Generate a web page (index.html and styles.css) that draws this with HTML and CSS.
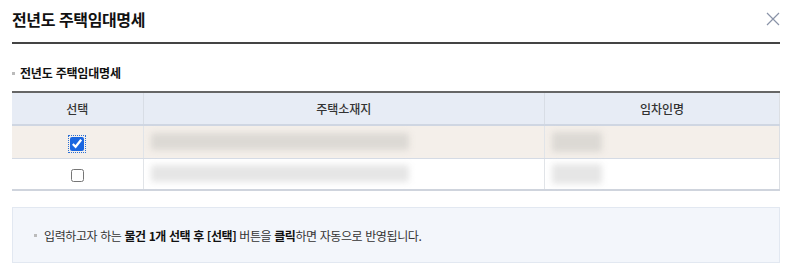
FILE: index.html
```html
<!DOCTYPE html>
<html lang="ko">
<head>
<meta charset="utf-8">
<link rel="stylesheet" href="styles.css">
</head>
<body>
<div class="modal">
  <div class="head">
    <h1 class="title">전년도 주택임대명세</h1>
    <button class="close" aria-label="닫기">
      <svg width="14" height="14" viewBox="0 0 14 14"><path d="M1 1L13 13M13 1L1 13" stroke="#8a93a8" stroke-width="1.2" fill="none"/></svg>
    </button>
  </div>
  <div class="body">
    <h2 class="sub">전년도 주택임대명세</h2>
    <table class="grid">
      <colgroup><col class="c1"><col class="c2"><col class="c3"></colgroup>
      <thead>
        <tr><th>선택</th><th>주택소재지</th><th>임차인명</th></tr>
      </thead>
      <tbody>
        <tr class="sel">
          <td class="chk"><input type="checkbox" class="cb focus" checked></td>
          <td><div class="blur addr"></div></td>
          <td><div class="blur name"></div></td>
        </tr>
        <tr>
          <td class="chk"><input type="checkbox" class="cb"></td>
          <td><div class="blur addr light"></div></td>
          <td><div class="blur name light"></div></td>
        </tr>
      </tbody>
    </table>
    <div class="info">
      <p class="note"><span class="dot"></span><span>입력하고자 하는 <b>물건 1개 선택 후 [선택]</b> 버튼을 <b>클릭</b>하면 자동으로 반영됩니다.</span></p>
    </div>
  </div>
</div>
</body>
</html>
```

FILE: styles.css
```css
* { box-sizing: border-box; }
html, body { margin: 0; padding: 0; background: #fff; }
body {
  font-family: "Noto Sans CJK KR", "Noto Sans", sans-serif;
  color: #222;
  width: 800px;
  height: 280px;
  overflow: hidden;
}
.modal { padding: 0 20px 0 12px; }
.head {
  display: flex;
  align-items: center;
  justify-content: space-between;
  height: 44px;
  border-bottom: 2px solid #444;
  padding-bottom: 4px;
}
.title {
  margin: 0;
  font-size: 16px;
  font-weight: 700;
  letter-spacing: -0.4px;
  line-height: 24px;
  color: #111;
}
.close {
  border: 0;
  background: none;
  padding: 0;
  width: 14px;
  height: 14px;
  display: flex;
}
.body { padding-top: 20px; }
.sub {
  margin: 0 0 9px 0;
  font-size: 12px;
  font-weight: 700;
  letter-spacing: -0.2px;
  line-height: 18px;
  color: #111;
  display: flex;
  align-items: center;
}
.sub::before {
  content: "";
  width: 3px;
  height: 3px;
  background: #bbb;
  margin-right: 5px;
}
.grid {
  width: 768px;
  border-collapse: collapse;
  border-top: 2px solid #666;
  border-bottom: 2px solid #cfd4dd;
  font-size: 12px;
}
.c1 { width: 131px; }
.c3 { width: 235px; }
.grid th {
  height: 33px;
  background: #e7ecf5;
  font-weight: 500;
  color: #333;
  border-right: 1px solid #d8dde5;
  border-bottom: 2px solid #cfd6e2;
  padding: 0;
}
.grid td {
  height: 33px;
  padding: 0 7px;
  border-right: 1px solid #e1e4e8;
  border-bottom: 1px solid #d5dbe5;
}
.grid tbody tr:last-child td { border-bottom: 0; height: 32px; }
.grid th:last-child, .grid td:last-child { border-right: 1px solid #dcdfe4; }
.grid tr.sel td { background: #f4efea; }
.chk { text-align: center; }
.cb {
  margin: 0;
  width: 13px;
  height: 13px;
  vertical-align: middle;
}
.focus {
  width: 14px;
  height: 14px;
  outline: 1px dotted #2a6fd6;
  outline-offset: 1px;
  accent-color: #1a66e0;
}
.blur {
  height: 17px;
  background: #dcd9d4;
  filter: blur(3px);
  border-radius: 2px;
}
.addr { width: 258px; }
.name { width: 50px; height: 20px; }
.light { background: #e6e6e6; }
.info {
  margin-top: 16px;
  height: 56px;
  background: #f3f6fb;
  border: 1px solid #e2e8f1;
  display: flex;
  align-items: center;
  padding-left: 21px;
}
.note {
  margin: 0;
  font-size: 12px;
  letter-spacing: -0.4px;
  color: #333;
  display: flex;
  align-items: center;
}
.dot {
  width: 3px;
  height: 3px;
  background: #bbb;
  margin-right: 7px;
}
.note b { font-weight: 700; color: #111; }
```
